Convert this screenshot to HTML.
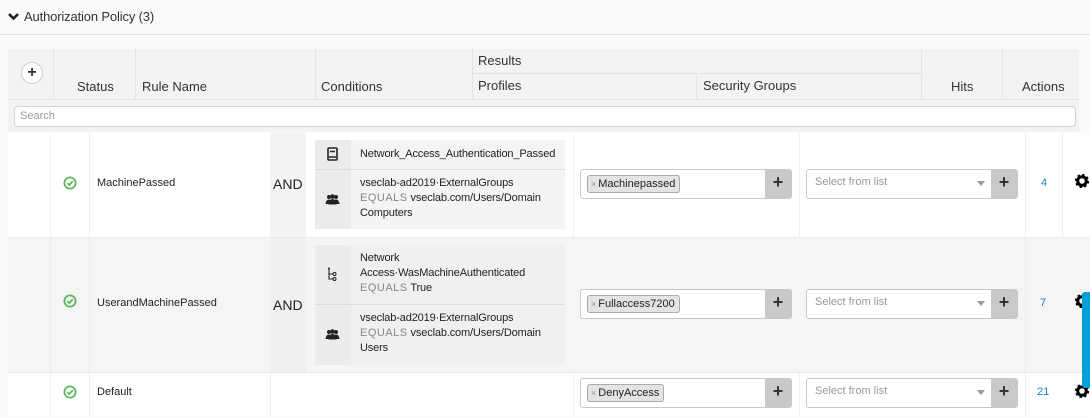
<!DOCTYPE html>
<html><head><meta charset="utf-8"><style>
*{margin:0;padding:0;box-sizing:border-box}
body{width:1090px;height:417px;overflow:hidden;background:#fafafa;font-family:"Liberation Sans",Arial,sans-serif;color:#333;position:relative}
.a{position:absolute}
.t{position:absolute;white-space:nowrap}
.vl{position:absolute;width:1px;background:#e4e4e4}
.hl{position:absolute;height:1px;background:#e0e0e0}
.hd{font-size:13px;color:#333}
.rt{font-size:11px;color:#222}
.ct{font-size:11px;color:#222;line-height:15px;letter-spacing:-0.15px}
.eq{color:#888;letter-spacing:.5px}
.inp{position:absolute;background:#fff;border:1px solid #c8c8c8;border-radius:3px;overflow:hidden}
.pb{position:absolute;right:0;top:0;bottom:0;width:26px;background:#c8c9cb;font-size:18px;font-weight:bold;color:#333;text-align:center;line-height:24px}
.tag{position:absolute;left:6px;top:5px;height:18px;border:1px solid #aaa;border-radius:3px;background:#e4e4e4;font-size:11px;line-height:16px;padding:0 4px 0 3px;color:#222}
.tag b{color:#999;font-weight:normal;font-size:9px;margin-right:2px}
.ph{position:absolute;left:8px;top:6px;font-size:11px;color:#999}
.arr{position:absolute;right:32px;top:11px;width:0;height:0;border-left:4px solid transparent;border-right:4px solid transparent;border-top:5px solid #999}
.num{font-size:11px;color:#1a7fbf}
</style></head><body>
<svg width="0" height="0" style="position:absolute"><defs><g id="gear"><circle cx="7" cy="7" r="4.3" fill="none" stroke="#000" stroke-width="3"/><circle cx="7" cy="7" r="5.8" fill="none" stroke="#000" stroke-width="2.6" stroke-dasharray="2.3 2.25"/></g></defs></svg>
<!-- title -->
<svg class="a" style="left:8px;top:12px" width="11" height="9" viewBox="0 0 11 9"><path d="M1 2 L5.5 6.5 L10 2" stroke="#222" stroke-width="2.6" fill="none"/></svg>
<div class="t" style="left:24px;top:9px;font-size:13px;color:#333;letter-spacing:-0.15px">Authorization Policy (3)</div>
<div class="hl" style="left:0;top:34px;width:1090px;background:#e2e2e2"></div>

<!-- header -->
<div class="a" style="left:8px;top:49px;width:1071px;height:51px;background:#f3f3f3"></div>
<div class="vl" style="left:53px;top:49px;height:51px"></div>
<div class="vl" style="left:135px;top:49px;height:51px"></div>
<div class="vl" style="left:315px;top:49px;height:51px"></div>
<div class="vl" style="left:472px;top:49px;height:51px"></div>
<div class="vl" style="left:696px;top:74px;height:26px"></div>
<div class="vl" style="left:921px;top:49px;height:51px"></div>
<div class="vl" style="left:1002px;top:49px;height:51px"></div>
<div class="hl" style="left:472px;top:73px;width:449px"></div>
<div class="hl" style="left:8px;top:99px;width:1071px;background:#e6e6e6"></div>
<div class="a" style="left:21px;top:62px;width:22px;height:22px;border:1px solid #ccc;border-radius:50%;background:#fff;text-align:center;font-size:16px;line-height:19px;font-weight:bold;color:#333">+</div>
<div class="t hd" style="left:77px;top:79px">Status</div>
<div class="t hd" style="left:142px;top:79px">Rule Name</div>
<div class="t hd" style="left:321px;top:79px">Conditions</div>
<div class="t hd" style="left:478px;top:53px">Results</div>
<div class="t hd" style="left:478px;top:78px">Profiles</div>
<div class="t hd" style="left:703px;top:78px">Security Groups</div>
<div class="t hd" style="left:951px;top:79px">Hits</div>
<div class="t hd" style="left:1022px;top:79px">Actions</div>
<!-- search -->
<div class="a" style="left:8px;top:100px;width:1071px;height:32px;background:#f3f3f3"></div>
<div class="a" style="left:14px;top:106px;width:1062px;height:21px;background:#fff;border:1px solid #d4d4d4;border-radius:4px"></div>
<div class="t" style="left:20px;top:110px;font-size:11px;color:#999">Search</div>

<!-- row1 -->
<div class="a" style="left:8px;top:133px;width:1082px;height:104px;background:#fff"></div>
<div class="a" style="left:270px;top:133px;width:36px;height:104px;background:#f4f4f4"></div>
<div class="vl" style="left:50px;top:133px;height:104px;background:#f0f0f0"></div>
<div class="vl" style="left:89px;top:133px;height:104px;background:#f0f0f0"></div>
<div class="vl" style="left:573px;top:133px;height:104px;background:#f0f0f0"></div>
<div class="vl" style="left:799px;top:133px;height:104px;background:#f0f0f0"></div>
<div class="vl" style="left:1025px;top:133px;height:104px;background:#f0f0f0"></div>
<div class="vl" style="left:1062px;top:133px;height:104px;background:#f0f0f0"></div>
<svg class="a" style="left:63px;top:176px" width="14" height="14" viewBox="0 0 14 14"><circle cx="7" cy="7" r="5.6" stroke="#5cb85c" stroke-width="1.8" fill="none"/><path d="M4.3 7.2 L6.3 9 L9.8 5.2" stroke="#5cb85c" stroke-width="1.8" fill="none"/></svg>
<div class="t rt" style="left:97px;top:177px">MachinePassed</div>
<div class="t" style="left:273px;top:176px;font-size:14px;color:#222">AND</div>
<div class="a" style="left:315px;top:140px;width:250px;height:89px;background:#f4f4f4"></div>
<div class="a" style="left:315px;top:140px;width:36px;height:89px;background:#ebebeb"></div>
<div class="hl" style="left:315px;top:169px;width:250px;background:#dcdcdc"></div>
<svg class="a" style="left:327px;top:147px" width="11" height="14" viewBox="0 0 11 14"><rect x="1" y="1" width="9" height="12" rx="1" stroke="#222" stroke-width="1.6" fill="none"/><path d="M3 4.5 H8 M2 10 H9" stroke="#222" stroke-width="1.4"/></svg>
<div class="t ct" style="left:360px;top:147px">Network_Access_Authentication_Passed</div>
<svg class="a" style="left:325px;top:194px" width="15" height="11" viewBox="0 0 15 11"><circle cx="4" cy="3" r="2" fill="#222"/><circle cx="11" cy="3" r="2" fill="#222"/><circle cx="7.5" cy="2.5" r="2.3" fill="#222"/><path d="M0.5 10 Q1 5.5 4 5.5 Q7 5.5 7.5 10Z M7.5 10 Q8 5.5 11 5.5 Q14 5.5 14.5 10Z M3.5 10.5 Q4 5 7.5 5 Q11 5 11.5 10.5Z" fill="#222"/></svg>
<div class="t ct" style="left:360px;top:176px">vseclab-ad2019·ExternalGroups<br><span class="eq">EQUALS</span> vseclab.com/Users/Domain<br>Computers</div>
<div class="inp" style="left:580px;top:169px;width:212px;height:30px"><div class="tag"><b>×</b>Machinepassed</div><div class="pb">+</div></div>
<div class="inp" style="left:806px;top:169px;width:212px;height:30px"><div class="ph">Select from list</div><div class="arr"></div><div class="pb">+</div></div>
<div class="t num" style="left:1041px;top:177px">4</div>
<svg class="a" style="left:1075px;top:174px" width="14" height="14" viewBox="0 0 14 14"><use href="#gear"/></svg>

<!-- row2 -->
<div class="a" style="left:8px;top:238px;width:1082px;height:134px;background:#f5f5f5"></div>
<div class="hl" style="left:8px;top:237px;width:1082px;background:#ebebeb"></div>
<div class="a" style="left:270px;top:238px;width:36px;height:134px;background:#efefef"></div>
<div class="vl" style="left:50px;top:238px;height:134px;background:#ececec"></div>
<div class="vl" style="left:89px;top:238px;height:134px;background:#ececec"></div>
<div class="vl" style="left:1025px;top:238px;height:134px;background:#ececec"></div>
<svg class="a" style="left:63px;top:294px" width="14" height="14" viewBox="0 0 14 14"><circle cx="7" cy="7" r="5.6" stroke="#5cb85c" stroke-width="1.8" fill="none"/><path d="M4.3 7.2 L6.3 9 L9.8 5.2" stroke="#5cb85c" stroke-width="1.8" fill="none"/></svg>
<div class="t rt" style="left:97px;top:297px">UserandMachinePassed</div>
<div class="t" style="left:273px;top:297px;font-size:14px;color:#222">AND</div>
<div class="a" style="left:315px;top:245px;width:250px;height:120px;background:#ececec"></div>
<div class="a" style="left:351px;top:245px;width:214px;height:120px;background:#f0f0f0"></div>
<div class="hl" style="left:315px;top:304px;width:250px;background:#dcdcdc"></div>
<svg class="a" style="left:327px;top:267px" width="10" height="14" viewBox="0 0 10 14"><path d="M2 1 V12 H6 M2 7 H6" stroke="#222" stroke-width="1.1" fill="none"/><circle cx="7.5" cy="7" r="1.5" stroke="#222" fill="none"/><circle cx="7.5" cy="12" r="1.5" stroke="#222" fill="none"/><circle cx="2" cy="1.5" r="1" fill="#222"/></svg>
<div class="t ct" style="left:360px;top:251px">Network<br>Access·WasMachineAuthenticated<br><span class="eq">EQUALS</span> True</div>
<svg class="a" style="left:325px;top:329px" width="15" height="11" viewBox="0 0 15 11"><circle cx="4" cy="3" r="2" fill="#222"/><circle cx="11" cy="3" r="2" fill="#222"/><circle cx="7.5" cy="2.5" r="2.3" fill="#222"/><path d="M0.5 10 Q1 5.5 4 5.5 Q7 5.5 7.5 10Z M7.5 10 Q8 5.5 11 5.5 Q14 5.5 14.5 10Z M3.5 10.5 Q4 5 7.5 5 Q11 5 11.5 10.5Z" fill="#222"/></svg>
<div class="t ct" style="left:360px;top:311px">vseclab-ad2019·ExternalGroups<br><span class="eq">EQUALS</span> vseclab.com/Users/Domain<br>Users</div>
<div class="inp" style="left:580px;top:289px;width:212px;height:30px"><div class="tag"><b>×</b>Fullaccess7200</div><div class="pb">+</div></div>
<div class="inp" style="left:806px;top:289px;width:212px;height:30px"><div class="ph">Select from list</div><div class="arr"></div><div class="pb">+</div></div>
<div class="t num" style="left:1040px;top:297px">7</div>
<svg class="a" style="left:1075px;top:294px" width="14" height="14" viewBox="0 0 14 14"><use href="#gear"/></svg>

<!-- row3 -->
<div class="a" style="left:8px;top:373px;width:1082px;height:43px;background:#fff"></div>
<div class="hl" style="left:8px;top:372px;width:1082px;background:#e8e8e8"></div>
<div class="vl" style="left:50px;top:373px;height:43px;background:#f0f0f0"></div>
<div class="vl" style="left:89px;top:373px;height:43px;background:#f0f0f0"></div>
<div class="vl" style="left:270px;top:373px;height:43px;background:#f0f0f0"></div>
<div class="vl" style="left:573px;top:373px;height:43px;background:#f0f0f0"></div>
<div class="vl" style="left:799px;top:373px;height:43px;background:#f0f0f0"></div>
<div class="vl" style="left:1025px;top:373px;height:43px;background:#f0f0f0"></div>
<svg class="a" style="left:63px;top:385px" width="14" height="14" viewBox="0 0 14 14"><circle cx="7" cy="7" r="5.6" stroke="#5cb85c" stroke-width="1.8" fill="none"/><path d="M4.3 7.2 L6.3 9 L9.8 5.2" stroke="#5cb85c" stroke-width="1.8" fill="none"/></svg>
<div class="t rt" style="left:97px;top:386px">Default</div>
<div class="inp" style="left:580px;top:378px;width:212px;height:30px"><div class="tag"><b>×</b>DenyAccess</div><div class="pb">+</div></div>
<div class="inp" style="left:806px;top:378px;width:212px;height:30px"><div class="ph">Select from list</div><div class="arr"></div><div class="pb">+</div></div>
<div class="t num" style="left:1037px;top:386px">21</div>
<svg class="a" style="left:1075px;top:384px" width="14" height="14" viewBox="0 0 14 14"><use href="#gear"/></svg>

<!-- blue bar -->
<div class="a" style="left:1082px;top:292px;width:8px;height:96px;background:#049fd9;border-radius:3px 0 0 3px"></div>
</body></html>
